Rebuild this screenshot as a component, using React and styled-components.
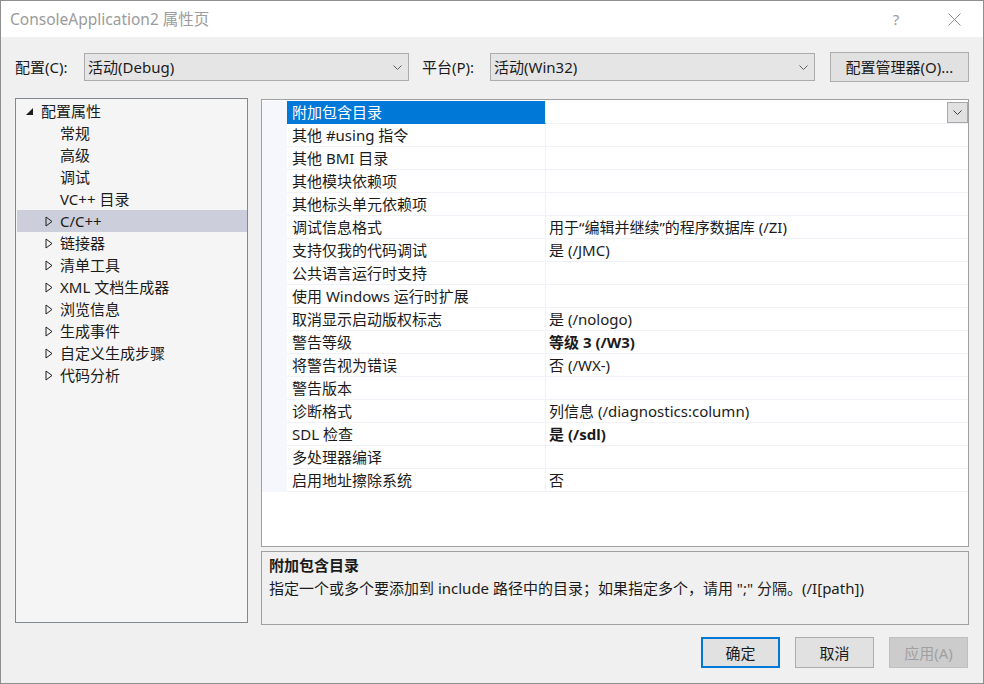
import React from 'react'
import styled, {createGlobalStyle, css} from 'styled-components'

const FONT = '"Noto Sans", "Noto Sans CJK SC", sans-serif'

const GlobalStyle = createGlobalStyle`
  html, body {
    margin: 0;
    padding: 0;
    background: #ffffff;
  }
  body {
    font-family: ${FONT};
    font-size: 15px;
    color: #1b1b1b;
  }
  * {
    box-sizing: border-box;
  }
`

const Window = styled.div`
  width: 984px;
  height: 684px;
  border: 1px solid #8f8f8f;
  display: flex;
  flex-direction: column;
  background: #f0f0f0;
  overflow: hidden;
`

const TitleBar = styled.div`
  height: 36px;
  flex: none;
  background: #ffffff;
  display: flex;
  align-items: center;
  padding: 0 0 0 9px;
`

const Title = styled.div`
  flex: 1;
  color: #9b9b9b;
  font-size: 15.5px;
  line-height: 20px;
`

const CaptionButton = styled.div`
  width: 58px;
  height: 36px;
  display: flex;
  align-items: center;
  justify-content: center;
  color: #9b9b9b;
  font-size: 15px;
`

const Body = styled.div`
  flex: 1;
  display: flex;
  flex-direction: column;
  padding: 15px 14px 0 14px;
`

const ConfigRow = styled.div`
  display: flex;
  align-items: center;
  height: 30px;
`

const Label = styled.span`
  line-height: 20px;
  width: ${p => p.w}px;
  padding-left: ${p => p.pad || 0}px;
  flex: none;
`

const Combo = styled.div`
  width: ${p => p.w}px;
  height: 28px;
  flex: none;
  background: #e5e5e5;
  border: 1px solid #acacac;
  display: flex;
  align-items: center;
  padding: 0 0 0 3px;
  line-height: 20px;
`

const ComboText = styled.span`
  flex: 1;
`

const ComboArrow = styled.span`
  width: 22px;
  display: flex;
  justify-content: center;
`

const Spacer = styled.span`
  flex: 1;
`

const Button = styled.div`
  width: ${p => p.w || 79}px;
  height: ${p => p.h || 31}px;
  flex: none;
  display: flex;
  align-items: center;
  justify-content: center;
  background: #e1e1e1;
  border: 1px solid #adadad;
  line-height: 20px;
  ${p =>
    p.primary &&
    css`
      border: 2px solid #0078d7;
    `}
  ${p =>
    p.disabled &&
    css`
      background: #cccccc;
      border-color: #bfbfbf;
      color: #a0a0a0;
    `}
`

const Main = styled.div`
  margin-top: 16px;
  height: 526px;
  display: flex;
  gap: 13px;
`

const Tree = styled.div`
  width: 233px;
  height: 525px;
  flex: none;
  border: 1px solid #828790;
  background: #f5f5f5;
  padding: 1px 0 0 1px;
`

const TreeRow = styled.div`
  height: 22px;
  display: flex;
  align-items: center;
  padding-left: ${p => p.indent}px;
  background: ${p => (p.selected ? '#cccedb' : 'transparent')};
  line-height: 20px;
`

const Toggle = styled.span`
  width: 19px;
  flex: none;
  display: flex;
  align-items: center;
  padding-left: ${p => (p.open ? 3 : 4)}px;
`

const RightCol = styled.div`
  flex: 1;
  display: flex;
  flex-direction: column;
  gap: 4px;
  padding-top: 1px;
`

const Grid = styled.div`
  height: 448px;
  flex: none;
  border: 1px solid #a0a0a0;
  background: #ffffff;
  padding-top: 1px;
`

const GridRow = styled.div`
  height: 23px;
  display: flex;
`

const Margin = styled.div`
  width: 25px;
  flex: none;
  background: #f5f7fc;
`

const NameCell = styled.div`
  width: 259px;
  flex: none;
  display: flex;
  align-items: center;
  padding-left: 5px;
  border-right: 1px solid #f0f2f7;
  border-bottom: 1px solid ${p => (p.selected ? '#0078d7' : '#f0f2f7')};
  background: ${p => (p.selected ? '#0078d7' : '#ffffff')};
  color: ${p => (p.selected ? '#ffffff' : 'inherit')};
  line-height: 20px;
`

const ValueCell = styled.div`
  flex: 1;
  display: flex;
  align-items: center;
  padding-left: 3px;
  border-bottom: 1px solid #f0f2f7;
  font-weight: ${p => (p.bold ? 700 : 400)};
  line-height: 20px;
  position: relative;
`

const CellDrop = styled.div`
  position: absolute;
  right: 0;
  top: 1px;
  width: 21px;
  height: 21px;
  background: #e1e1e1;
  border: 1px solid #a8a8a8;
  display: flex;
  align-items: center;
  justify-content: center;
`

const Desc = styled.div`
  height: 74px;
  flex: none;
  border: 1px solid #a0a0a0;
  background: #f0f0f0;
  padding: 3px 7px;
  line-height: 20px;
`

const DescTitle = styled.div`
  font-weight: 700;
  margin-bottom: 3px;
`

const DescText = styled.div`
  font-size: 15px;
`

const Footer = styled.div`
  margin-top: 13px;
  display: flex;
  justify-content: flex-end;
  gap: 15px;
  padding-right: 1px;
`

const Chevron = ({w = 9, color = '#606060'}) => (
  <svg width={w} height={5} viewBox="0 0 9 5">
    <polyline points="0.5,0.5 4.5,4.5 8.5,0.5" fill="none" stroke={color} strokeWidth="1" />
  </svg>
)

const OpenArrow = () => (
  <svg width="9" height="9" viewBox="0 0 9 9">
    <polygon points="8,1 8,8 1,8" fill="#1e1e1e" />
  </svg>
)

const ClosedArrow = () => (
  <svg width="8" height="11" viewBox="0 0 8 11">
    <polygon points="1,1 7,5.5 1,10" fill="none" stroke="#1e1e1e" strokeWidth="1" />
  </svg>
)

const CloseIcon = () => (
  <svg width="13" height="13" viewBox="0 0 13 13">
    <path d="M0.5 0.5 L12.5 12.5 M12.5 0.5 L0.5 12.5" stroke="#8a8a8a" strokeWidth="1" />
  </svg>
)

const treeItems = [
  {label: '配置属性', level: 0, open: true},
  {label: '常规', level: 1},
  {label: '高级', level: 1},
  {label: '调试', level: 1},
  {label: 'VC++ 目录', level: 1},
  {label: 'C/C++', level: 1, closed: true, selected: true},
  {label: '链接器', level: 1, closed: true},
  {label: '清单工具', level: 1, closed: true},
  {label: 'XML 文档生成器', level: 1, closed: true},
  {label: '浏览信息', level: 1, closed: true},
  {label: '生成事件', level: 1, closed: true},
  {label: '自定义生成步骤', level: 1, closed: true},
  {label: '代码分析', level: 1, closed: true}
]

const props = [
  {name: '附加包含目录', selected: true},
  {name: '其他 #using 指令'},
  {name: '其他 BMI 目录'},
  {name: '其他模块依赖项'},
  {name: '其他标头单元依赖项'},
  {name: '调试信息格式', value: '用于“编辑并继续”的程序数据库 (/ZI)'},
  {name: '支持仅我的代码调试', value: '是 (/JMC)'},
  {name: '公共语言运行时支持'},
  {name: '使用 Windows 运行时扩展'},
  {name: '取消显示启动版权标志', value: '是 (/nologo)'},
  {name: '警告等级', value: '等级 3 (/W3)', bold: true},
  {name: '将警告视为错误', value: '否 (/WX-)'},
  {name: '警告版本'},
  {name: '诊断格式', value: '列信息 (/diagnostics:column)'},
  {name: 'SDL 检查', value: '是 (/sdl)', bold: true},
  {name: '多处理器编译'},
  {name: '启用地址擦除系统', value: '否'}
]

const TreeItem = ({item}) => {
  const hasToggle = item.open || item.closed
  const indent = item.level === 0 ? 5 : hasToggle ? 24 : 43
  return (
    <TreeRow indent={indent} selected={item.selected}>
      {hasToggle && (
        <Toggle open={item.open}>{item.open ? <OpenArrow /> : <ClosedArrow />}</Toggle>
      )}
      <span>{item.label}</span>
    </TreeRow>
  )
}

export default function App() {
  return (
    <>
      <GlobalStyle />
      <Window>
        <TitleBar>
          <Title>ConsoleApplication2 属性页</Title>
          <CaptionButton>?</CaptionButton>
          <CaptionButton>
            <CloseIcon />
          </CaptionButton>
        </TitleBar>
        <Body>
          <ConfigRow>
            <Label w={69}>配置(C):</Label>
            <Combo w={325}>
              <ComboText>活动(Debug)</ComboText>
              <ComboArrow>
                <Chevron />
              </ComboArrow>
            </Combo>
            <Label w={81} pad={13}>
              平台(P):
            </Label>
            <Combo w={325}>
              <ComboText>活动(Win32)</ComboText>
              <ComboArrow>
                <Chevron />
              </ComboArrow>
            </Combo>
            <Spacer />
            <Button w={139} h={30}>
              配置管理器(O)...
            </Button>
          </ConfigRow>
          <Main>
            <Tree>
              {treeItems.map(item => (
                <TreeItem key={item.label} item={item} />
              ))}
            </Tree>
            <RightCol>
              <Grid>
                {props.map(p => (
                  <GridRow key={p.name}>
                    <Margin />
                    <NameCell selected={p.selected}>{p.name}</NameCell>
                    <ValueCell bold={p.bold}>
                      {p.value}
                      {p.selected && (
                        <CellDrop>
                          <Chevron color="#404040" />
                        </CellDrop>
                      )}
                    </ValueCell>
                  </GridRow>
                ))}
              </Grid>
              <Desc>
                <DescTitle>附加包含目录</DescTitle>
                <DescText>
                  指定一个或多个要添加到 include 路径中的目录；如果指定多个，请用 ";" 分隔。(/I[path])
                </DescText>
              </Desc>
            </RightCol>
          </Main>
          <Footer>
            <Button primary>确定</Button>
            <Button>取消</Button>
            <Button disabled>应用(A)</Button>
          </Footer>
        </Body>
      </Window>
    </>
  )
}
